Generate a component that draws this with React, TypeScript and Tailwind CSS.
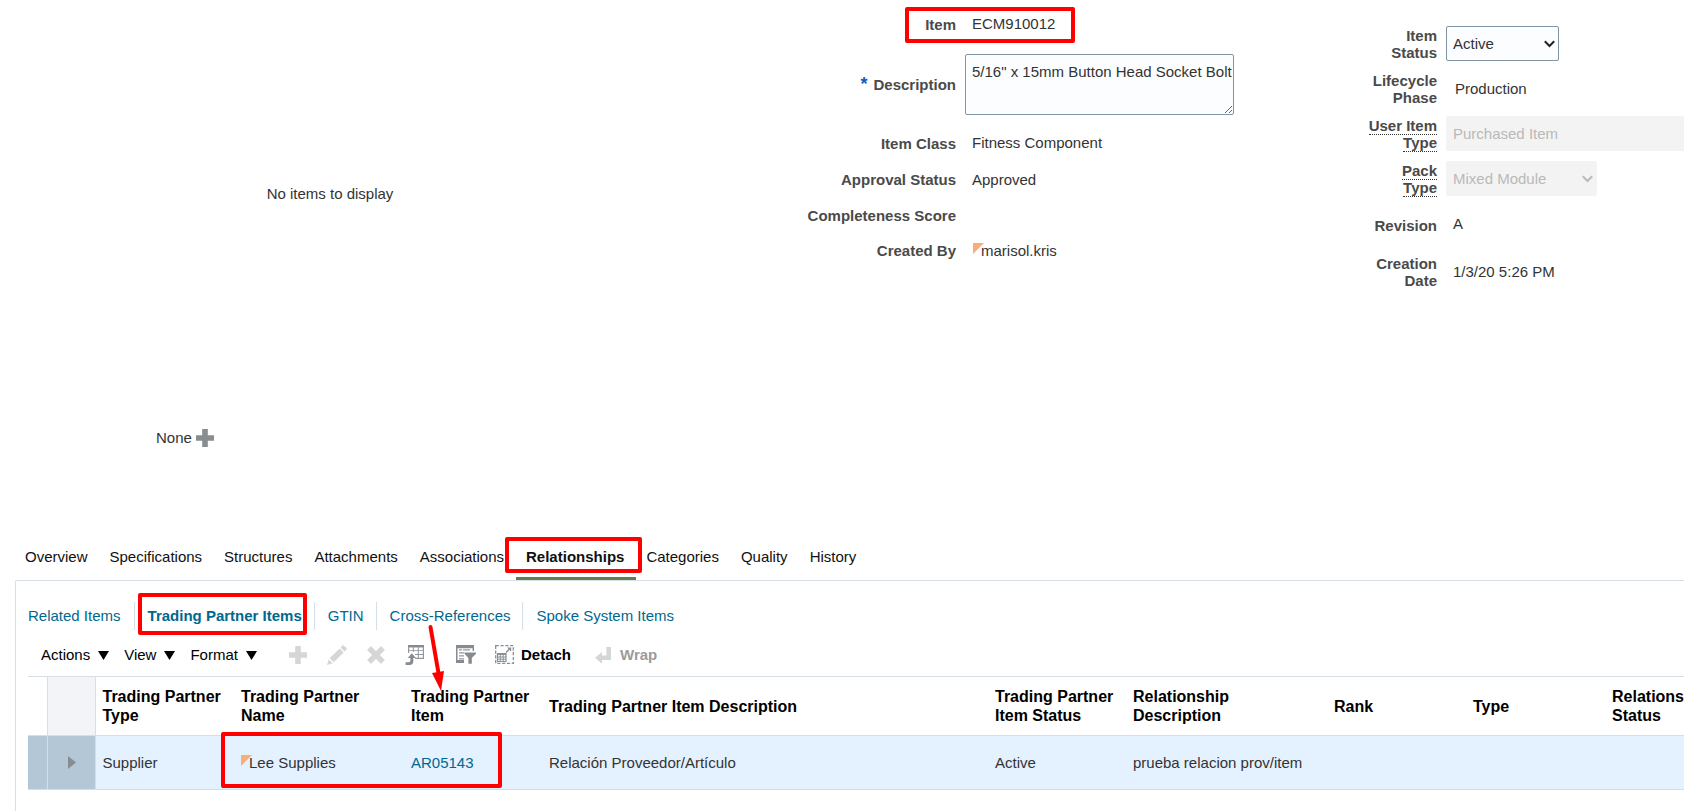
import React from "react";

interface FieldProps {
  label: string;
  htmlFor?: string;
  hint?: boolean;
  height?: string;
  children?: React.ReactNode;
}

const itemTabs = [
  "Overview",
  "Specifications",
  "Structures",
  "Attachments",
  "Associations",
  "Relationships",
  "Categories",
  "Quality",
  "History",
];

const relationTabs = [
  "Related Items",
  "Trading Partner Items",
  "GTIN",
  "Cross-References",
  "Spoke System Items",
];

const columns = [
  "Trading Partner Type",
  "Trading Partner Name",
  "Trading Partner Item",
  "Trading Partner Item Description",
  "Trading Partner Item Status",
  "Relationship Description",
  "Rank",
  "Type",
  "Relationship Status",
];

const Highlight: React.FC<{ className: string }> = ({ className }) => (
  <span
    aria-hidden="true"
    className={`pointer-events-none absolute z-10 rounded-xs border-4 border-[#ff0000] ${className}`}
  />
);

const Corner = () => (
  <svg width="11" height="11" viewBox="0 0 11 11" className="-mr-[3px] mb-1 shrink-0" aria-hidden="true">
    <path d="M0 0H11L0 11Z" fill="#f8ad7c" />
  </svg>
);

const Chevron: React.FC<{ className: string }> = ({ className }) => (
  <svg
    width="11"
    height="8"
    viewBox="0 0 11 8"
    className={`pointer-events-none absolute right-1 top-1/2 -translate-y-1/2 ${className}`}
    fill="none"
    stroke="currentColor"
    strokeWidth="2"
    aria-hidden="true"
  >
    <path d="M0.8 1.3L5.5 6L10.2 1.3" />
  </svg>
);

const PlusIcon: React.FC<{ color: string }> = ({ color }) => (
  <svg width="18" height="18" viewBox="0 0 18 18" aria-hidden="true">
    <path d="M6.2 0H11.8V6.2H18V11.8H11.8V18H6.2V11.8H0V6.2H6.2Z" fill={color} />
  </svg>
);

const PencilIcon = () => (
  <svg width="20" height="20" viewBox="0 0 20 20" fill="#d5d6d8" aria-hidden="true">
    <path d="M0 20L1.6 14.4L5.8 18.3Z" />
    <path d="M2.6 13.3L12.6 3.5L16.7 7.5L6.8 17.3Z" />
    <path d="M13.6 2.5L15.5 0.6Q16.2 0 17 0.6L19.5 3Q20.2 3.8 19.5 4.6L17.6 6.5Z" />
  </svg>
);

const DeleteIcon = () => (
  <svg width="18" height="18" viewBox="0 0 18 18" aria-hidden="true">
    <path d="M2 2L16 16M16 2L2 16" stroke="#d5d6d8" strokeWidth="5.4" />
  </svg>
);

const ExportIcon = () => (
  <svg width="20" height="20" viewBox="0 0 20 20" aria-hidden="true">
    <path d="M3 0H19V14H10V12.8H17.8V10H10V9H17.8V5.8H13.8V12.8H12.8V5.8H8.8V7H7.8V5.8H4.2V8H3Z" fill="#93989c" />
    <path d="M3 0H19V2.4H3Z" fill="#858b90" />
    <path d="M4.2 2.4H7.8V5H4.2ZM8.8 2.4H12.8V5H8.8ZM13.8 2.4H17.8V5H13.8Z" fill="#fff" />
    <path d="M6.8 8.2L10.8 13H8.3V16Q8.3 20 4.5 20H0.6V17.2H4Q5.4 17.2 5.4 15.8V13H2.8Z" fill="#858b90" />
  </svg>
);

const FilterIcon = () => (
  <svg width="20" height="20" viewBox="0 0 20 20" aria-hidden="true">
    <path d="M0 0H18V6H16.6V3.2H1.5V15H8V18H0Z" fill="#858b90" />
    <path d="M3 4.8H6M7 4.8H14M3 7.8H8M3 10.8H8M3 13.8H8" stroke="#93989c" strokeWidth="1.3" />
    <path d="M8.5 7.6H20V8.8L15.8 13V18.8H12.4V13L8.5 8.8Z" fill="#858b90" />
  </svg>
);

const DetachIcon = () => (
  <svg width="19" height="19" viewBox="0 0 19 19" fill="none" stroke="#8b9094" aria-hidden="true">
    <rect x="0.7" y="0.7" width="17.6" height="17.6" strokeWidth="1.3" strokeDasharray="3.2 1.6" />
    <path d="M2.5 8.5H11V16.5H2.5Z" strokeWidth="1.2" />
    <path d="M2.5 9.5H11M5.3 9V16.5M8.2 9V16.5M2.5 12H11M2.5 14.2H11" />
    <path d="M11 7.5L15 3.5" strokeWidth="1.5" />
    <path d="M12 2.5H16.2V6.7Z" fill="#8b9094" stroke="none" />
  </svg>
);

const WrapIcon = () => (
  <svg width="17" height="18" viewBox="0 0 17 18" aria-hidden="true">
    <path d="M11.4 1H16V14H7V17.8L0 11.8L7 6V9.6H11.4Z" fill="#d5d6d8" />
  </svg>
);

const ItemField: React.FC<FieldProps & { required?: boolean }> = ({
  label,
  htmlFor,
  required,
  height = "h-[35px]",
  children,
}) => {
  const text = (
    <>
      {required && <span className="mr-1.5 text-lg leading-none text-[#0f5fb8]">*</span>}
      {label}
    </>
  );
  return (
    <div className={`relative flex items-center ${height}`}>
      <div className="w-[296px] shrink-0 text-right font-bold text-[#4a4a4a]">
        {htmlFor ? <label htmlFor={htmlFor}>{text}</label> : text}
      </div>
      {children}
    </div>
  );
};

const StatusField: React.FC<FieldProps> = ({ label, htmlFor, hint, height = "h-[35px]", children }) => {
  const text = <span className={hint ? "border-b border-dotted border-[#333]" : ""}>{label}</span>;
  return (
    <div className={`flex items-center ${height}`}>
      <div className="mr-[9px] w-[89px] shrink-0 pl-[18px] text-right font-bold leading-[17px] text-[#4a4a4a]">
        {htmlFor ? <label htmlFor={htmlFor}>{text}</label> : text}
      </div>
      {children}
    </div>
  );
};

const MenuButton: React.FC<{ label: string }> = ({ label }) => (
  <button type="button" className="flex items-center gap-2">
    {label}
    <svg width="11" height="9" viewBox="0 0 11 9" className="mt-0.5" aria-hidden="true">
      <path d="M0 0H11L5.5 9Z" fill="#000" />
    </svg>
  </button>
);

const ItemSummary = () => (
  <section className="grid min-h-[534px] grid-cols-[660fr_688fr_336fr]">
    <div>
      <p className="pt-[183px] text-center">No items to display</p>
      <div className="mt-[222px] flex items-center gap-1 pl-[156px]">
        None
        <button type="button" aria-label="Add">
          <PlusIcon color="#878d91" />
        </button>
      </div>
    </div>

    <div className="pt-[7px]">
      <ItemField label="Item" height="h-9">
        <span className="pl-4 pb-[3px]">ECM910012</span>
        <Highlight className="inset-y-0 left-[245px] w-[170px]" />
      </ItemField>
      <ItemField label="Description" htmlFor="description" required height="h-[83px]">
        <textarea
          id="description"
          defaultValue={'5/16" x 15mm Button Head Socket Bolt'}
          className="ml-[9px] h-[61px] w-[269px] overflow-hidden whitespace-nowrap rounded-xs border border-[#7f95a6] bg-[#fcfdfe] pl-1.5 pt-2 leading-[18px]"
        />
      </ItemField>
      <ItemField label="Item Class" height="h-[35px]">
        <span className="pl-4 pb-px">Fitness Component</span>
      </ItemField>
      <ItemField label="Approval Status" height="h-[38px]">
        <span className="pl-4">Approved</span>
      </ItemField>
      <ItemField label="Completeness Score" height="h-[33px]" />
      <ItemField label="Created By" height="h-[37px]">
        <span className="flex items-center pl-[17px]">
          <Corner />
          marisol.kris
        </span>
      </ItemField>
    </div>

    <div className="flex min-w-0 flex-col gap-[10px] pt-[26px]">
      <StatusField label="Item Status" htmlFor="item-status">
        <span className="relative">
          <select
            id="item-status"
            className="block h-[35px] w-[113px] appearance-none rounded-xs border border-[#7f95a6] bg-[#fcfdfe] pl-1.5"
          >
            <option>Active</option>
          </select>
          <Chevron className="text-[#222]" />
        </span>
      </StatusField>
      <StatusField label="Lifecycle Phase">
        <span className="pl-[9px]">Production</span>
      </StatusField>
      <StatusField label="User Item Type" htmlFor="user-item-type" hint>
        <input
          id="user-item-type"
          disabled
          defaultValue="Purchased Item"
          className="h-[35px] min-w-0 flex-1 rounded-l-xs bg-[#f3f3f3] pl-[7px] text-[#b9b9b9]"
        />
      </StatusField>
      <StatusField label="Pack Type" htmlFor="pack-type" hint>
        <span className="relative">
          <select
            id="pack-type"
            disabled
            className="block h-[35px] w-[151px] appearance-none rounded-xs bg-[#f3f3f3] pl-[7px] text-[#b9b9b9] opacity-100"
          >
            <option>Mixed Module</option>
          </select>
          <Chevron className="text-[#b9b9b9]" />
        </span>
      </StatusField>
      <StatusField label="Revision" height="h-[38px]">
        <span className="pl-[7px] pb-[3px]">A</span>
      </StatusField>
      <StatusField label="Creation Date">
        <span className="pl-[7px]">1/3/20 5:26 PM</span>
      </StatusField>
    </div>
  </section>
);

const ItemTabs = () => (
  <nav className="flex h-[46px] pl-[15px] text-[#111]">
    {itemTabs.map((tab) => {
      const active = tab === "Relationships";
      return (
        <button
          key={tab}
          type="button"
          className={`relative border-b-[3px] pl-[10px] pr-3 pt-[3px] ${
            active ? "border-[#5d8250] font-bold" : "border-transparent"
          }`}
        >
          {tab}
          {active && <Highlight className="-left-[11px] -right-[6px] top-[3px] h-9" />}
        </button>
      );
    })}
  </nav>
);

const RelationTabs = () => (
  <nav className="flex pt-[21px] text-[#00688f]">
    {relationTabs.map((tab) => (
      <div
        key={tab}
        className="relative border-l border-[#d6dfe6] py-[3px] pl-[13px] pr-3 first:border-l-0 first:pl-0 first:pr-[13px]"
      >
        <a
          href={`#${tab.toLowerCase().replace(/ /g, "-")}`}
          className={tab === "Trading Partner Items" ? "font-bold" : ""}
        >
          {tab}
        </a>
        {tab === "Trading Partner Items" && <Highlight className="-top-[9px] left-[3px] right-[7px] h-[42px]" />}
        {tab === "Cross-References" && (
          <svg
            width="20"
            height="70"
            viewBox="0 0 20 70"
            className="pointer-events-none absolute left-[50px] top-[22px] z-10"
            aria-hidden="true"
          >
            <path d="M3.5 3L12 52" stroke="#ff0000" strokeWidth="4" strokeLinecap="round" />
            <path d="M5 49L17 47L14 67Z" fill="#ff0000" />
          </svg>
        )}
      </div>
    ))}
  </nav>
);

const Toolbar = () => (
  <div className="flex h-[46px] items-center pl-[13px] pt-[3px] text-black">
    <div className="flex gap-[15px]">
      <MenuButton label="Actions" />
      <MenuButton label="View" />
      <MenuButton label="Format" />
    </div>
    <div className="ml-8 flex items-center gap-5">
      <button type="button" disabled aria-label="Create">
        <PlusIcon color="#d5d6d8" />
      </button>
      <button type="button" disabled aria-label="Edit">
        <PencilIcon />
      </button>
      <button type="button" disabled aria-label="Delete">
        <DeleteIcon />
      </button>
      <button type="button" aria-label="Export to Excel">
        <ExportIcon />
      </button>
    </div>
    <button type="button" aria-label="Query by Example" className="ml-[31px]">
      <FilterIcon />
    </button>
    <button type="button" className="ml-[19px] flex items-center gap-[7px] font-bold">
      <DetachIcon />
      Detach
    </button>
    <button type="button" disabled className="ml-6 flex items-center gap-2 font-bold text-[#9b9b9b]">
      <WrapIcon />
      Wrap
    </button>
  </div>
);

const PartnerTable = () => (
  <div className="overflow-hidden">
    <table className="w-[1715px] table-fixed border-collapse text-left">
      <colgroup>
        <col className="w-[19px]" />
        <col className="w-[48px]" />
        <col className="w-[139px]" />
        <col className="w-[170px]" />
        <col className="w-[138px]" />
        <col className="w-[446px]" />
        <col className="w-[138px]" />
        <col className="w-[201px]" />
        <col className="w-[139px]" />
        <col className="w-[139px]" />
        <col className="w-[138px]" />
      </colgroup>
      <thead>
        <tr className="h-[59px] border-y border-[#d6dfe6] text-base leading-[19px] text-black">
          <td className="border-r border-[#d6dfe6]" />
          <td className="border-r border-[#d6dfe6] bg-[#f3f4f8]" />
          {columns.map((col) => (
            <th key={col} scope="col" className="px-[7px]">
              {col}
            </th>
          ))}
        </tr>
      </thead>
      <tbody>
        <tr className="h-[54px] border-b border-[#d6dfe6] bg-[#e4f1ff]">
          <td className="border-r border-[#d6dfe6] bg-[#b4c7d6]" />
          <td className="border-r border-[#d6dfe6] bg-[#b4c7d6]">
            <button type="button" aria-label="Expand" className="ml-5 block">
              <svg width="8" height="13" viewBox="0 0 8 13" aria-hidden="true">
                <path d="M0 0L8 6.5L0 13Z" fill="#888d92" />
              </svg>
            </button>
          </td>
          <td className="px-[7px]">Supplier</td>
          <td className="relative px-[7px]">
            <span className="flex items-center">
              <Corner />
              Lee Supplies
            </span>
            <Highlight className="-top-[4px] -left-[13px] h-[56px] w-[281px]" />
          </td>
          <td className="px-[7px]">
            <a href="#AR05143" className="text-[#00688f]">
              AR05143
            </a>
          </td>
          <td className="px-[7px]">Relación Proveedor/Artículo</td>
          <td className="px-[7px]">Active</td>
          <td className="px-[7px]">prueba relacion prov/item</td>
          <td />
          <td />
          <td />
        </tr>
      </tbody>
    </table>
  </div>
);

export default function App() {
  return (
    <main className="flex min-h-screen flex-col overflow-hidden bg-white font-['Liberation_Sans',Arial,sans-serif] text-[15px] leading-[22px] text-[#333]">
      <ItemSummary />
      <ItemTabs />
      <section className="ml-[15px] flex-1 rounded-tl-xs border-l border-t border-[#d6dfe6] pl-3">
        <RelationTabs />
        <Toolbar />
        <PartnerTable />
      </section>
    </main>
  );
}
